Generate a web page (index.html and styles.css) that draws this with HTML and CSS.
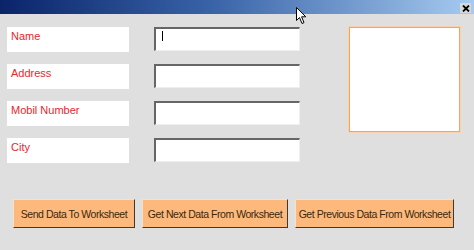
FILE: index.html
```html
<!DOCTYPE html>
<html lang="en">
<head>
    <meta charset="UTF-8">
    <title>Data Form</title>
    <link rel="stylesheet" href="styles.css">
</head>
<body>

<div class="window">
    <div class="titlebar">
        <button class="close">
            <svg width="8" height="7" viewBox="0 0 8 7">
                <path d="M1 0.5 L7 6.5 M7 0.5 L1 6.5" stroke="#000" stroke-width="1.8"/>
            </svg>
        </button>
    </div>

    <div class="form">
        <div class="fields">
            <div class="label">Name</div>
            <div class="input"><span class="caret"></span></div>
            <div class="label">Address</div>
            <div class="input"></div>
            <div class="label">Mobil Number</div>
            <div class="input"></div>
            <div class="label">City</div>
            <div class="input"></div>
        </div>
        <div class="picture"></div>
    </div>

    <div class="buttons">
        <button class="btn btn-send">Send Data To Worksheet</button>
        <button class="btn btn-next">Get Next Data From Worksheet</button>
        <button class="btn btn-prev">Get Previous Data From Worksheet</button>
    </div>

    <svg class="pointer" width="12" height="18" viewBox="0 0 12 18">
        <path d="M0.5 0.5 L0.5 13.5 L3.5 10.5 L6 16.5 L8 15.6 L5.6 9.8 L9.8 9.8 Z" fill="#fff" stroke="#000" stroke-width="1"/>
    </svg>
</div>

</body>
</html>
```

FILE: styles.css
```css
body {
    margin: 0;
    background-color: #dfdfdf;
    font-family: "Liberation Sans", Arial, sans-serif;
}

.window {
    position: relative;
    width: 474px;
    height: 250px;
    overflow: hidden;
    background: #dfdfdf;
}

.titlebar {
    height: 14px;
    background: linear-gradient(to right, #0a246a 0%, #3a64a8 45%, #a6caf0 100%);
    display: flex;
    justify-content: flex-end;
    align-items: flex-start;
    padding-right: 3px;
}

.close {
    width: 11px;
    height: 10px;
    margin-top: 3px;
    padding: 0;
    border: none;
    background: #d8d8d8;
    display: flex;
    justify-content: center;
    align-items: center;
}

.form {
    display: flex;
    padding: 13px 0 0 7px;
}

.fields {
    display: grid;
    grid-template-columns: 122px 146px;
    grid-auto-rows: 25px;
    column-gap: 25px;
    row-gap: 12px;
}

.label {
    background: #fff;
    color: #e8262c;
    font-size: 11px;
    padding: 3px 0 0 4px;
    box-sizing: border-box;
}

.input {
    height: 24px;
    background: #fff;
    border-top: 2px solid #666;
    border-left: 2px solid #666;
    border-bottom: 1px solid #eee;
    border-right: 1px solid #eee;
    box-sizing: border-box;
    padding: 2px 0 0 6px;
}

.caret {
    display: block;
    width: 1px;
    height: 10px;
    background: #000;
}

.picture {
    width: 111px;
    height: 105px;
    margin-left: 49px;
    background: #fff;
    border: 1px solid #f2a55c;
    box-shadow: 0 0 0 1px #f9d2ad;
    box-sizing: border-box;
}

.buttons {
    display: flex;
    gap: 7px;
    padding-left: 13px;
    margin-top: 36px;
}

.btn {
    height: 29px;
    padding: 0;
    background: #fdb97b;
    border-top: 1px solid #fbe0c6;
    border-left: 1px solid #fbe0c6;
    border-right: 1px solid #3a3a3a;
    border-bottom: 1px solid #3a3a3a;
    color: #3a2810;
    font-family: "Liberation Sans", Arial, sans-serif;
    font-size: 10.5px;
    letter-spacing: -0.45px;
}

.btn-send { width: 122px; }
.btn-next { width: 146px; }
.btn-prev { width: 159px; }

.pointer {
    position: absolute;
    left: 296px;
    top: 7px;
}
```
